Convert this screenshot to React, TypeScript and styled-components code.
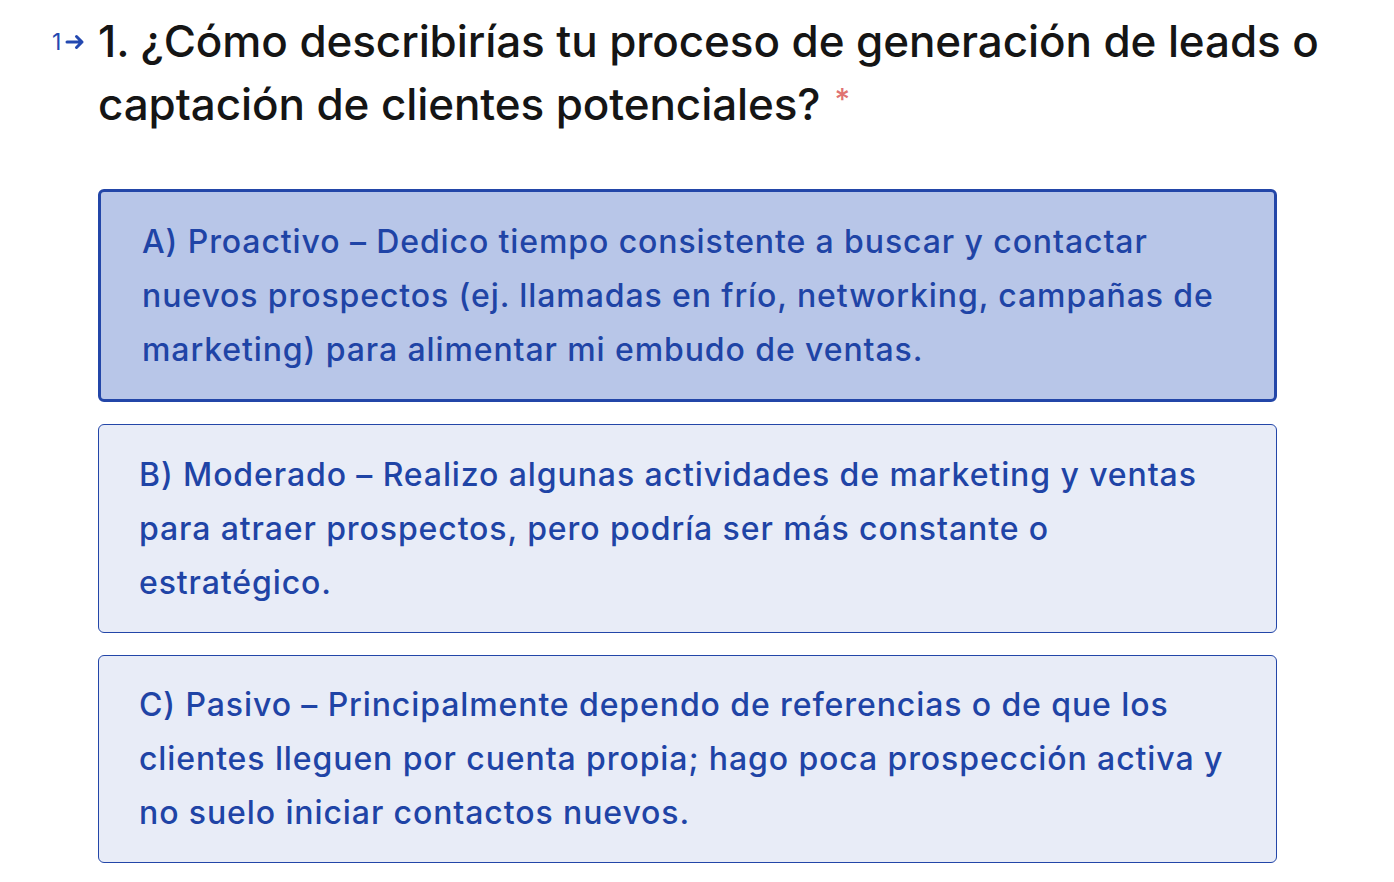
import React from "react";
import styled, { createGlobalStyle } from "styled-components";

const Global = createGlobalStyle`
  html, body { margin: 0; padding: 0; background: #ffffff; }
  body { font-family: Inter, "Noto Sans", sans-serif; }
`;

const Page = styled.div`
  display: flex;
  padding: 10px 0 0 52px;
`;

const Counter = styled.div`
  display: flex;
  align-items: center;
  gap: 3px;
  height: 64px;
  width: 46px;
  flex-shrink: 0;
  color: #2348b0;
  font-size: 23px;
`;

const Body = styled.div`
  display: flex;
  flex-direction: column;
  width: 1240px;
`;

const Question = styled.h1`
  margin: 0;
  font-weight: 500;
  font-size: 44px;
  line-height: 63px;
  color: #151515;
  letter-spacing: -0.1px;
`;

const Star = styled.span`
  display: inline-block;
  color: #e07272;
  font-size: 30px;
  line-height: 1;
  margin-left: 14px;
  vertical-align: 10px;
`;

const Options = styled.div`
  display: flex;
  flex-direction: column;
  gap: 22px;
  margin-top: 53px;
`;

const Option = styled.div<{ $selected?: boolean }>`
  box-sizing: border-box;
  width: 1179px;
  border-radius: 6px;
  border: ${(p) => (p.$selected ? "3px" : "1.5px")} solid #2346a8;
  background: ${(p) => (p.$selected ? "#b8c6e8" : "#e8ecf7")};
  padding: ${(p) => (p.$selected ? "22.5px 38px 22.5px 41px" : "22.5px 40px 22px 40px")};
  color: #1f44a6;
  font-size: 32px;
  font-weight: 500;
  line-height: 54px;
  letter-spacing: 0.9px;
`;

const options = [
  "A) Proactivo – Dedico tiempo consistente a buscar y contactar nuevos prospectos (ej. llamadas en frío, networking, campañas de marketing) para alimentar mi embudo de ventas.",
  "B) Moderado – Realizo algunas actividades de marketing y ventas para atraer prospectos, pero podría ser más constante o estratégico.",
  "C) Pasivo – Principalmente dependo de referencias o de que los clientes lleguen por cuenta propia; hago poca prospección activa y no suelo iniciar contactos nuevos.",
];

export default function App() {
  return (
    <>
      <Global />
      <Page>
        <Counter>
          <span>1</span>
          <svg width="24" height="18" viewBox="0 0 24 18" fill="none">
            <path d="M3 9h15M12.5 3.5 18 9l-5.5 5.5" stroke="#2348b0" strokeWidth="3" strokeLinecap="round" strokeLinejoin="round" />
          </svg>
        </Counter>
        <Body>
          <Question>
            1. ¿Cómo describirías tu proceso de generación de leads o captación de clientes potenciales?
            <Star>*</Star>
          </Question>
          <Options>
            {options.map((o, i) => (
              <Option key={i} $selected={i === 0}>
                {o}
              </Option>
            ))}
          </Options>
        </Body>
      </Page>
    </>
  );
}
